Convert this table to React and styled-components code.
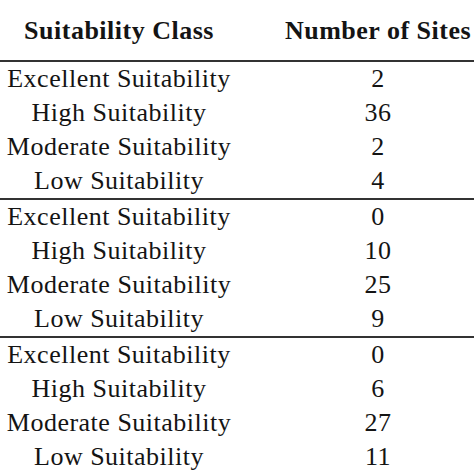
import React from "react";
import styled, { createGlobalStyle } from "styled-components";

const GlobalStyle = createGlobalStyle`
  html, body {
    margin: 0;
    padding: 0;
    background: #ffffff;
  }
  body {
    width: 474px;
    height: 474px;
    overflow: hidden;
  }
`;

const Table = styled.div`
  width: 518px;
  font-family: "Liberation Serif", "DejaVu Serif", serif;
  font-size: 26px;
  letter-spacing: 0.5px;
  color: #141414;
`;

const HeaderRow = styled.div`
  display: grid;
  grid-template-columns: 238px 280px;
  height: 59px;
  padding-top: 1px;
  align-items: center;
  border-bottom: 2px solid #333333;
  font-weight: bold;
`;

const Group = styled.div`
  border-bottom: ${(p) => (p.last ? "none" : "2px solid #333333")};
`;

const Row = styled.div`
  display: grid;
  grid-template-columns: 238px 280px;
  height: 34px;
  align-items: center;
`;

const Cell = styled.div`
  text-align: center;
  white-space: nowrap;
`;

const groups = [
  [
    ["Excellent Suitability", "2"],
    ["High Suitability", "36"],
    ["Moderate Suitability", "2"],
    ["Low Suitability", "4"],
  ],
  [
    ["Excellent Suitability", "0"],
    ["High Suitability", "10"],
    ["Moderate Suitability", "25"],
    ["Low Suitability", "9"],
  ],
  [
    ["Excellent Suitability", "0"],
    ["High Suitability", "6"],
    ["Moderate Suitability", "27"],
    ["Low Suitability", "11"],
  ],
];

export default function App() {
  return (
    <>
      <GlobalStyle />
      <Table>
        <HeaderRow>
          <Cell>Suitability Class</Cell>
          <Cell>Number of Sites</Cell>
        </HeaderRow>
        {groups.map((rows, gi) => (
          <Group key={gi} last={gi === groups.length - 1}>
            {rows.map(([label, count], ri) => (
              <Row key={ri}>
                <Cell>{label}</Cell>
                <Cell>{count}</Cell>
              </Row>
            ))}
          </Group>
        ))}
      </Table>
    </>
  );
}
